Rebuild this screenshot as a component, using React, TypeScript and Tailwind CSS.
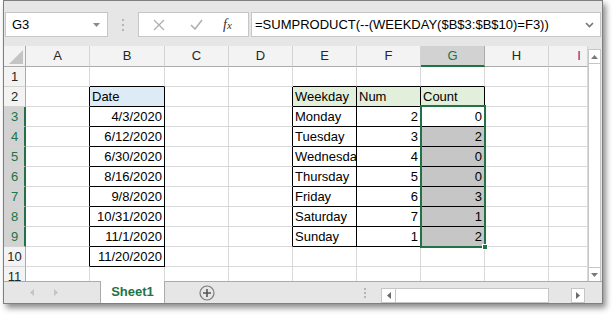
import React from 'react';

type ColDef = { key: string; w: string };

const COLS: ColDef[] = [
  { key: 'A', w: 'w-[64px]' },
  { key: 'B', w: 'w-[75px]' },
  { key: 'C', w: 'w-[64px]' },
  { key: 'D', w: 'w-[64px]' },
  { key: 'E', w: 'w-[64px]' },
  { key: 'F', w: 'w-[64px]' },
  { key: 'G', w: 'w-[64px]' },
  { key: 'H', w: 'w-[64px]' },
  { key: 'I', w: 'w-[39px]' },
];

const ROWS = [1, 2, 3, 4, 5, 6, 7, 8, 9, 10, 11];

const dates = ['4/3/2020', '6/12/2020', '6/30/2020', '8/16/2020', '9/8/2020', '10/31/2020', '11/1/2020', '11/20/2020'];
const days = [
  { name: 'Monday', num: 2, count: 0 },
  { name: 'Tuesday', num: 3, count: 2 },
  { name: 'Wednesday', num: 4, count: 0 },
  { name: 'Thursday', num: 5, count: 0 },
  { name: 'Friday', num: 6, count: 3 },
  { name: 'Saturday', num: 7, count: 1 },
  { name: 'Sunday', num: 1, count: 2 },
];

type CellData = { text: string; right?: boolean; fill?: string };

// what sits in each cell
function cellAt(r: number, c: string): CellData | null {
  if (c === 'B') {
    if (r === 2) return { text: 'Date', fill: 'bg-[#ddebf7]' };
    if (r >= 3 && r <= 10) return { text: dates[r - 3], right: true };
  }
  if (r === 2 && c === 'E') return { text: 'Weekday', fill: 'bg-[#e2efda]' };
  if (r === 2 && c === 'F') return { text: 'Num', fill: 'bg-[#e2efda]' };
  if (r === 2 && c === 'G') return { text: 'Count', fill: 'bg-[#e2efda]' };
  if (r >= 3 && r <= 9) {
    const d = days[r - 3];
    if (c === 'E') return { text: d.name };
    if (c === 'F') return { text: String(d.num), right: true };
    if (c === 'G') return { text: String(d.count), right: true, fill: r === 3 ? undefined : 'bg-[#c6c6c6]' };
  }
  return null;
}

const bordered = (r: number, c: string) =>
  (c === 'B' && r >= 2 && r <= 10) || ((c === 'E' || c === 'F' || c === 'G') && r >= 2 && r <= 9);

const nextCol = (c: string) => String.fromCharCode(c.charCodeAt(0) + 1);

const Cell: React.FC<{ r: number; c: ColDef }> = ({ r, c }) => {
  const data = cellAt(r, c.key);
  const rightBlack = bordered(r, c.key) || bordered(r, nextCol(c.key));
  const bottomBlack = bordered(r, c.key) || bordered(r + 1, c.key);
  return (
    <div
      className={`${c.w} h-[20px] shrink-0 border-r border-b overflow-hidden whitespace-nowrap leading-[20px] text-[13px] text-black ${
        rightBlack ? 'border-r-black' : 'border-r-[#d9d9d9]'
      } ${bottomBlack ? 'border-b-black' : 'border-b-[#d9d9d9]'} ${data?.fill ?? 'bg-white'} ${
        data?.right ? 'text-right pr-[2px]' : 'pl-[2px]'
      }`}
    >
      {data?.text}
    </div>
  );
};

const SheetGrid: React.FC = () => (
  <div className="relative h-[235px] overflow-hidden">
    {/* column headers */}
    <div className="flex h-[21px]">
      <div className="w-[22px] shrink-0 bg-[#f3f3f3] border-r border-b border-[#ababab] flex items-end justify-end p-[2px]">
        <svg width="14" height="14" viewBox="0 0 14 14">
          <polygon points="14,0 14,14 0,14" fill="#c4c4c4" />
        </svg>
      </div>
      {COLS.map(c =>
        c.key === 'G' ? (
          <div
            key={c.key}
            className={`${c.w} shrink-0 bg-[#d2d2d2] border-r border-r-[#ababab] border-b-2 border-b-[#217346] text-center text-[13px] leading-[20px] text-[#217346]`}
          >
            {c.key}
          </div>
        ) : (
          <div
            key={c.key}
            className={`${c.w} shrink-0 bg-[#f3f3f3] border-r border-r-[#d4d4d4] border-b border-b-[#ababab] text-center text-[13px] leading-[20px] ${
              c.key === 'I' ? 'text-[#7a1f7a] pl-[22px]' : 'text-[#262626]'
            }`}
          >
            {c.key}
          </div>
        )
      )}
    </div>

    {ROWS.map(r => {
      const sel = r >= 3 && r <= 9;
      return (
        <div key={r} className="flex">
          <div
            className={`w-[22px] h-[20px] shrink-0 border-b border-b-[#d4d4d4] text-center text-[13px] leading-[20px] ${
              sel
                ? 'bg-[#d2d2d2] border-r-2 border-r-[#217346] text-[#217346] pl-[1px]'
                : 'bg-[#f3f3f3] border-r border-r-[#ababab] text-[#262626]'
            }`}
          >
            {r}
          </div>
          {COLS.map(c => (
            <Cell key={c.key} r={r} c={c} />
          ))}
        </div>
      );
    })}

    {/* selection G3:G9 */}
    <div className="absolute left-[416px] top-[59px] w-[66px] h-[143px] border-2 border-[#217346] pointer-events-none">
      <div className="absolute -right-[4px] -bottom-[4px] w-[6px] h-[6px] bg-[#217346] border border-white" />
    </div>
  </div>
);

const VScroll: React.FC = () => (
  <div className="w-[14px] h-[235px] shrink-0 bg-[#e6e6e6] pt-[3px] pr-[1px]">
    <div className="h-full bg-white border border-[#c6c6c6] border-b-0 flex flex-col justify-between">
      <div className="h-[14px] border-b border-[#c6c6c6] flex items-center justify-center">
        <svg width="7" height="4" viewBox="0 0 7 4"><polygon points="0,4 7,4 3.5,0" fill="#7a7a7a" /></svg>
      </div>
      <div className="h-[14px] border-t border-[#c6c6c6] flex items-center justify-center">
        <svg width="7" height="4" viewBox="0 0 7 4"><polygon points="0,0 7,0 3.5,4" fill="#7a7a7a" /></svg>
      </div>
    </div>
  </div>
);

const FormulaBar: React.FC = () => (
  <div className="h-[45px] bg-[#e6e6e6] flex items-start pt-[11px] pl-[1px] pr-[1px]">
    <div className="w-[103px] h-[25px] bg-white border border-[#c6c6c6] flex items-center justify-between pl-[6px] pr-[7px] text-[13px] text-black">
      <span>G3</span>
      <svg width="7" height="4" viewBox="0 0 7 4"><polygon points="0,0 7,0 3.5,4" fill="#8a8a8a" /></svg>
    </div>
    <div className="w-[30px] h-[25px] flex flex-col items-center justify-center gap-[3px]">
      <div className="w-[2px] h-[2px] bg-[#b5b5b5]" />
      <div className="w-[2px] h-[2px] bg-[#b5b5b5]" />
      <div className="w-[2px] h-[2px] bg-[#b5b5b5]" />
    </div>
    <div className="w-[111px] h-[25px] bg-white border border-[#c6c6c6] flex items-center pl-[14px] pr-[8px]">
      <svg width="12" height="12" viewBox="0 0 12 12" className="mr-[25px]">
        <path d="M1 1 L11 11 M11 1 L1 11" stroke="#b0b0b0" strokeWidth="1.3" fill="none" />
      </svg>
      <svg width="13" height="11" viewBox="0 0 13 11" className="mr-[20px]">
        <path d="M1 6 L5 10 L12 1" stroke="#b0b0b0" strokeWidth="1.6" fill="none" />
      </svg>
      <span className="text-[14px] italic text-[#333] font-['Liberation_Serif',serif]">
        f<span className="text-[11px]">x</span>
      </span>
    </div>
    <div className="ml-[2px] flex-1 h-[25px] bg-white border border-[#c6c6c6] flex items-center justify-between pl-[3px] pr-[6px] text-[13px] text-black whitespace-nowrap">
      <span>=SUMPRODUCT(--(WEEKDAY($B$3:$B$10)=F3))</span>
      <svg width="9" height="6" viewBox="0 0 9 6">
        <path d="M1 1 L4.5 4.5 L8 1" stroke="#777" strokeWidth="1.6" fill="none" />
      </svg>
    </div>
  </div>
);

const TabBar: React.FC = () => (
  <div className="h-[22px] bg-[#e6e6e6] flex">
    <div className="w-[97px] shrink-0 border-t border-r border-[#ababab] flex items-center pl-[26px] gap-[20px]">
      <svg width="4" height="7" viewBox="0 0 4 7"><polygon points="4,0 4,7 0,3.5" fill="#c4c4c4" /></svg>
      <svg width="4" height="7" viewBox="0 0 4 7"><polygon points="0,0 0,7 4,3.5" fill="#c4c4c4" /></svg>
    </div>
    <div className="w-[64px] shrink-0 bg-white border-r border-[#ababab] text-center text-[13px] font-bold text-[#217346] leading-[20px] pt-[1px]">
      Sheet1
    </div>
    <div className="flex-1 border-t border-[#ababab] flex items-center">
      <svg width="16" height="16" viewBox="0 0 16 16" className="ml-[34px]">
        <circle cx="8" cy="8" r="7" stroke="#7a7a7a" strokeWidth="1.2" fill="none" />
        <path d="M8 4 V12 M4 8 H12" stroke="#555" strokeWidth="1.6" />
      </svg>
      <div className="ml-[149px] flex flex-col gap-[2px]">
        <div className="w-[2px] h-[2px] bg-[#b5b5b5]" />
        <div className="w-[2px] h-[2px] bg-[#b5b5b5]" />
        <div className="w-[2px] h-[2px] bg-[#b5b5b5]" />
      </div>
      <div className="ml-[15px] mt-[6px] flex h-[15px]">
        <div className="w-[15px] bg-white border border-[#c6c6c6] flex items-center justify-center">
          <svg width="4" height="7" viewBox="0 0 4 7"><polygon points="4,0 4,7 0,3.5" fill="#6a6a6a" /></svg>
        </div>
        <div className="w-[153px] bg-white border-y border-r border-[#c6c6c6]" />
        <div className="w-[22px] bg-[#e6e6e6]" />
        <div className="w-[14px] bg-white border border-[#c6c6c6] flex items-center justify-center">
          <svg width="4" height="7" viewBox="0 0 4 7"><polygon points="0,0 0,7 4,3.5" fill="#6a6a6a" /></svg>
        </div>
      </div>
    </div>
  </div>
);

export default function App() {
  return (
    <div className="w-[612px] h-[315px] bg-white font-['Liberation_Sans',Arial,sans-serif] overflow-hidden">
      <div className="ml-[3px] w-[600px] h-[304px] border border-[#7f7f7f] bg-[#e6e6e6] shadow-[3px_4px_6px_rgba(0,0,0,0.45)] flex flex-col overflow-hidden">
        <FormulaBar />
        <div className="flex">
          <SheetGrid />
          <VScroll />
        </div>
        <TabBar />
      </div>
    </div>
  );
}
